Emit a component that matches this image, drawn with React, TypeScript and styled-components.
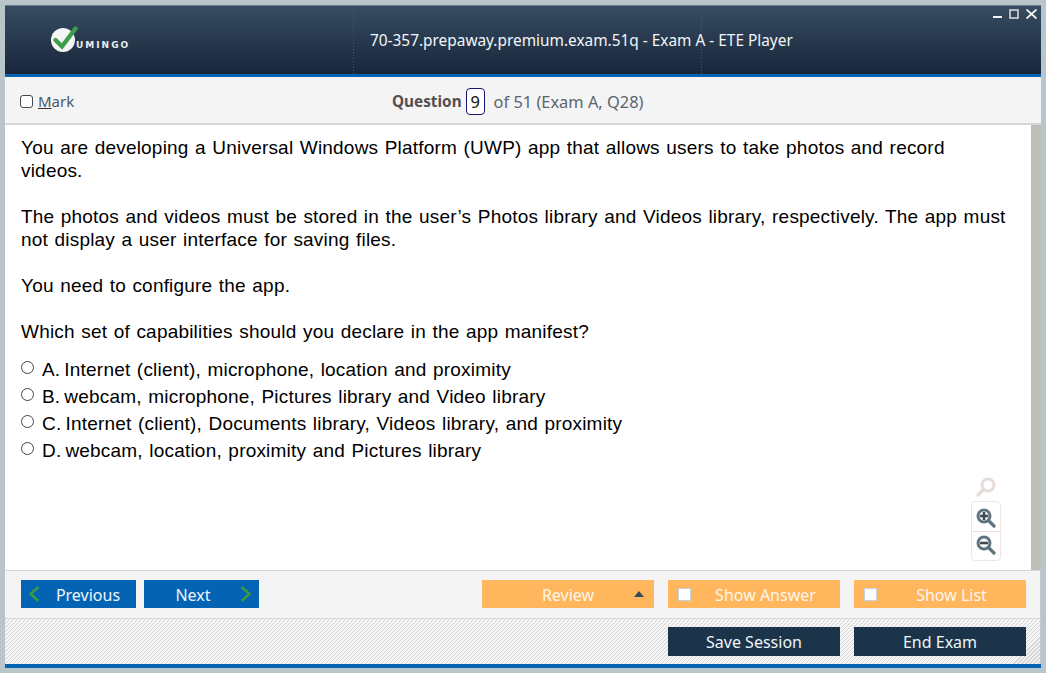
import React from 'react';
import styled, { createGlobalStyle } from 'styled-components';

const GlobalStyle = createGlobalStyle`
  html, body {
    margin: 0;
    padding: 0;
    height: 100%;
    background: #b8c6cc;
  }
  * { box-sizing: border-box; }
`;

const uiFont = `"Noto Sans", "Open Sans", sans-serif`;

const Win = styled.div`
  width: 1036px;
  height: 663px;
  margin: 5px 0 0 5px;
  display: flex;
  flex-direction: column;
  background: #fff;
  font-family: ${uiFont};
`;

const Header = styled.header`
  height: 72px;
  flex: none;
  display: flex;
  border-top: 1px solid #6d7c88;
  border-bottom: 3px solid #0563b4;
  background:
    repeating-linear-gradient(0deg, #3a5a80 0 1px, transparent 1px 3px) 348px 0 / 1px 100% no-repeat,
    repeating-linear-gradient(0deg, #3a5a80 0 1px, transparent 1px 3px) 696px 0 / 1px 100% no-repeat,
    linear-gradient(#374c62, #18263a);
`;

const Brand = styled.div`
  width: 365px;
  flex: none;
  display: flex;
  align-items: flex-end;
  padding: 0 0 22px 45px;
`;

const BrandName = styled.span`
  margin-left: -2px;
  padding-bottom: 2px;
  font-family: "DejaVu Sans", sans-serif;
  font-size: 9px;
  line-height: 10px;
  font-weight: 700;
  letter-spacing: 2px;
  color: #e8edf0;
`;

const Title = styled.div`
  flex: 1;
  padding-top: 25px;
  font-size: 15.4px;
  line-height: 20px;
  color: #f2f6f8;
  white-space: nowrap;
`;

const WinControls = styled.div`
  display: flex;
  gap: 7px;
  align-items: flex-start;
  padding: 3px 4px 0 0;
`;

const SubBar = styled.div`
  height: 48px;
  flex: none;
  display: flex;
  align-items: center;
  padding: 2px 0 0 15px;
  background: #f4f4f4;
  border-bottom: 2px solid #d6d6d6;
`;

const MarkLabel = styled.label`
  width: 372px;
  flex: none;
  display: flex;
  align-items: center;
  gap: 5px;
  font-size: 15px;
  color: #46586a;

  u { text-decoration-color: #333; }
`;

const MarkBox = styled.span`
  width: 13px;
  height: 13px;
  border: 1px solid #3f4a55;
  border-radius: 3px;
  background: #fff;
`;

const QuestionInfo = styled.div`
  display: flex;
  align-items: center;
  font-size: 16.4px;
  color: #5a6570;

  b {
    font-size: 15.3px;
    font-weight: 700;
    color: #54504f;
  }
`;

const QuestionNumber = styled.span`
  width: 19px;
  height: 27px;
  margin: 0 9px 0 4px;
  display: flex;
  align-items: center;
  justify-content: center;
  border: 1px solid #16166e;
  border-radius: 4px;
  background: #fff;
  color: #111;
`;

const Body = styled.main`
  position: relative;
  flex: 1;
  min-height: 0;
  display: flex;
`;

const Question = styled.div`
  flex: 1;
  padding: 11px 21px 0 16px;
  font-family: "Liberation Sans", Arial, sans-serif;
  font-size: 19px;
  letter-spacing: 0.2px;
  word-spacing: 1px;
  line-height: 23px;
  color: #000;

  p { margin: 0 0 23px; }
`;

const Options = styled.div`
  display: flex;
  flex-direction: column;
  margin-top: -10px;
`;

const Option = styled.label`
  height: 27px;
  display: flex;
  align-items: center;
`;

const Radio = styled.span`
  width: 13px;
  height: 13px;
  margin: -5px 8px 0 0;
  flex: none;
  border: 1px solid #444;
  border-radius: 50%;
  background: #fff;
`;

const OptionKey = styled.span`
  margin-right: 4px;
`;

const ScrollTrack = styled.div`
  width: 10px;
  flex: none;
  background: #bfbdb8;
`;

const ZoomTools = styled.div`
  position: absolute;
  right: 40px;
  bottom: 9px;
  display: flex;
  flex-direction: column;
  align-items: center;
  gap: 4px;
`;

const ZoomBox = styled.div`
  width: 30px;
  display: flex;
  flex-direction: column;
  align-items: center;
  padding: 2px 0;
  border: 1px solid #efe6e3;
  border-radius: 4px;
  background: #fff;
`;

const ZoomButton = styled.span`
  height: 27px;
  width: 100%;
  display: flex;
  align-items: center;
  justify-content: center;

  & + & { border-top: 1px solid #efdfda; }
`;

const FooterRow = styled.div`
  height: 48px;
  flex: none;
  display: flex;
  align-items: center;
  padding: 0 14px 1px 16px;
  background: #f4f4f4;
  border-top: 1px solid #d6d6d6;
  border-right: 1px solid #c8c8c8;
`;

const ActionRow = styled.div`
  height: 46px;
  flex: none;
  display: flex;
  align-items: center;
  justify-content: flex-end;
  gap: 14px;
  padding: 0 14px 0 0;
  border-top: 1px solid #d6d6d6;
  border-right: 1px solid #c8c8c8;
  background: repeating-linear-gradient(135deg, #d2d2d2 0 1px, #f6f6f6 1px 2.83px);
`;

const BottomLine = styled.div`
  height: 4px;
  flex: none;
  background: #0563b4;
`;

const ButtonLabel = styled.span<{ $left?: number; $right?: number }>`
  flex: 1;
  text-align: center;
  padding-left: ${p => p.$left ?? 0}px;
  padding-right: ${p => p.$right ?? 0}px;
`;

const Button = styled.div<{ $tone: 'blue' | 'orange' | 'navy'; $w: number }>`
  width: ${p => p.$w}px;
  height: ${p => (p.$tone === 'navy' ? 29 : 28)}px;
  flex: none;
  display: flex;
  align-items: center;
  justify-content: space-between;
  padding: 0 ${p => (p.$tone === 'blue' ? 8 : 10)}px;
  font-size: 16px;
  white-space: nowrap;
  color: ${p => (p.$tone === 'orange' ? '#fdf6ec' : '#eef6fb')};
  background: ${p => (p.$tone === 'blue' ? '#0563b4' : p.$tone === 'orange' ? '#ffb65c' : '#1b344a')};

  ${ButtonLabel} {
    padding-top: ${p => (p.$tone === 'navy' ? 0 : 2)}px;
  }
`;

const NavGroup = styled.div`
  display: flex;
  gap: 8px;
`;

const RightGroup = styled.div`
  margin-left: auto;
  display: flex;
  gap: 14px;
`;

const CheckBox = styled.span`
  width: 13px;
  height: 13px;
  flex: none;
  background: #fff;
  border: 1px solid #c8d2da;
`;

const Caret = styled.span`
  width: 0;
  height: 0;
  flex: none;
  border-left: 5px solid transparent;
  border-right: 5px solid transparent;
  border-bottom: 6px solid #34495e;
`;

const Chevron = ({ flip }: { flip?: boolean }) => (
  <svg width="11" height="16" viewBox="0 0 11 16" style={flip ? { transform: 'scaleX(-1)' } : undefined}>
    <path d="M9.5 1 L1.5 8 L9.5 15" fill="none" stroke="#3d9a3d" strokeWidth="2.4" />
  </svg>
);

const LogoMark = () => (
  <svg width="28" height="28" viewBox="0 0 28 28">
    <circle cx="13" cy="16" r="12" fill="#f4f6f6" />
    <path d="M5.5 16 L12 22.5 L25.5 4.5" fill="none" stroke="#3c9e49" strokeWidth="4.4" strokeLinecap="round" />
  </svg>
);

const Magnifier = ({ kind }: { kind: 'search' | 'plus' | 'minus' }) => {
  const c = kind === 'search' ? '#e6dcd8' : '#5f7480';
  return (
    <svg width="20" height="20" viewBox="0 0 20 20" style={kind === 'search' ? { transform: 'scaleX(-1)' } : undefined}>
      <circle cx="8" cy="8" r="6" fill={kind === 'search' ? '#fff' : 'none'} stroke={c} strokeWidth="3" />
      <path d="M12.5 12.5 L18 18" stroke={c} strokeWidth="3.2" strokeLinecap="round" />
      {kind !== 'search' && <path d="M4 8 H12" stroke="#3e4a54" strokeWidth="2.6" />}
      {kind === 'plus' && <path d="M8 4 V12" stroke="#3e4a54" strokeWidth="2.6" />}
    </svg>
  );
};

const options = [
  ['A.', 'Internet (client), microphone, location and proximity'],
  ['B.', 'webcam, microphone, Pictures library and Video library'],
  ['C.', 'Internet (client), Documents library, Videos library, and proximity'],
  ['D.', 'webcam, location, proximity and Pictures library'],
];

export default function App() {
  return (
    <>
      <GlobalStyle />
      <Win>
        <Header>
          <Brand>
            <LogoMark />
            <BrandName>UMINGO</BrandName>
          </Brand>
          <Title>70-357.prepaway.premium.exam.51q - Exam A - ETE Player</Title>
          <WinControls>
            <svg width="9" height="10" viewBox="0 0 9 10">
              <rect x="0" y="7" width="9" height="2" fill="#f2f2f2" />
            </svg>
            <svg width="10" height="10" viewBox="0 0 10 10">
              <rect x="1" y="1" width="8" height="8" fill="none" stroke="#d8d8d8" strokeWidth="1.6" />
            </svg>
            <svg width="11" height="10" viewBox="0 0 11 10">
              <path d="M0.5 0.5 L10.5 9.5 M10.5 0.5 L0.5 9.5" stroke="#f5f5f5" strokeWidth="1.8" />
            </svg>
          </WinControls>
        </Header>

        <SubBar>
          <MarkLabel>
            <MarkBox />
            <span><u>M</u>ark</span>
          </MarkLabel>
          <QuestionInfo>
            <b>Question</b>
            <QuestionNumber>9</QuestionNumber>
            of 51 (Exam A, Q28)
          </QuestionInfo>
        </SubBar>

        <Body>
          <Question>
            <p>You are developing a Universal Windows Platform (UWP) app that allows users to take photos and record videos.</p>
            <p>The photos and videos must be stored in the user’s Photos library and Videos library, respectively. The app must not display a user interface for saving files.</p>
            <p>You need to configure the app.</p>
            <p>Which set of capabilities should you declare in the app manifest?</p>
            <Options>
              {options.map(([key, text]) => (
                <Option key={key}>
                  <Radio />
                  <OptionKey>{key}</OptionKey>
                  {text}
                </Option>
              ))}
            </Options>
          </Question>
          <ScrollTrack />
          <ZoomTools>
            <Magnifier kind="search" />
            <ZoomBox>
              <ZoomButton><Magnifier kind="plus" /></ZoomButton>
              <ZoomButton><Magnifier kind="minus" /></ZoomButton>
            </ZoomBox>
          </ZoomTools>
        </Body>

        <FooterRow>
          <NavGroup>
            <Button $tone="blue" $w={115}>
              <Chevron />
              <ButtonLabel $left={8}>Previous</ButtonLabel>
            </Button>
            <Button $tone="blue" $w={115}>
              <ButtonLabel $right={6}>Next</ButtonLabel>
              <Chevron flip />
            </Button>
          </NavGroup>
          <RightGroup>
            <Button $tone="orange" $w={172}>
              <ButtonLabel $left={10}>Review</ButtonLabel>
              <Caret />
            </Button>
            <Button $tone="orange" $w={172}>
              <CheckBox />
              <ButtonLabel $left={10}>Show Answer</ButtonLabel>
            </Button>
            <Button $tone="orange" $w={172}>
              <CheckBox />
              <ButtonLabel $left={10}>Show List</ButtonLabel>
            </Button>
          </RightGroup>
        </FooterRow>

        <ActionRow>
          <Button $tone="navy" $w={172}><ButtonLabel>Save Session</ButtonLabel></Button>
          <Button $tone="navy" $w={172}><ButtonLabel>End Exam</ButtonLabel></Button>
        </ActionRow>
        <BottomLine />
      </Win>
    </>
  );
}
